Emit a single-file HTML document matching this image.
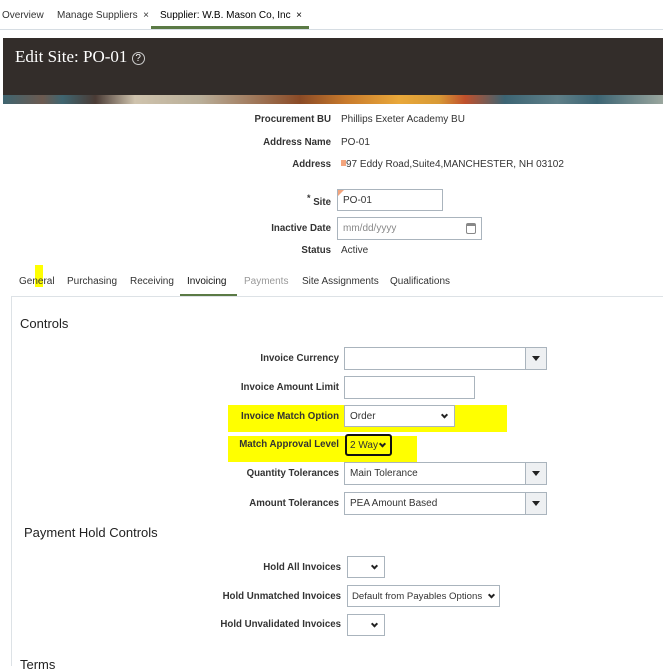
<!DOCTYPE html>
<html><head><style>
*{margin:0;padding:0;box-sizing:border-box}
body{width:663px;height:666px;overflow:hidden;background:#fff;font-family:"Liberation Sans",Arial,sans-serif;font-size:10px;color:#333;position:relative}
.a{position:absolute;white-space:nowrap}
.l{position:absolute;font-weight:bold;text-align:right;color:#333;white-space:nowrap;line-height:12px;font-size:9.7px}
.v{position:absolute;line-height:12px;white-space:nowrap}
.in{position:absolute;border:1px solid #aab4bd;background:#fff;font-size:10px;padding-left:5px;display:flex;align-items:center}
.btn{position:absolute;right:0;top:0;bottom:0;width:21px;border-left:1px solid #aab4bd;background:#eef0f2;display:flex;align-items:center;justify-content:center}
.tri{width:0;height:0;border-left:4px solid transparent;border-right:4px solid transparent;border-top:5px solid #222}
.chev{position:absolute;right:7px;top:50%;width:5px;height:5px;border-right:2px solid #222;border-bottom:2px solid #222;transform:translateY(-70%) rotate(45deg)}
.hl{position:absolute;background:#ffff00}
</style></head><body>
<div class="a" style="left:2px;top:10px;font-size:10px">Overview</div>
<div class="a" style="left:57px;top:10px;font-size:10px">Manage Suppliers &nbsp;×</div>
<div class="a" style="left:160px;top:10px;font-size:10px;color:#000">Supplier: W.B. Mason Co, Inc &nbsp;×</div>
<div class="a" style="left:151px;top:26px;width:158px;height:3px;background:#5b7a45"></div>
<div class="a" style="left:0;top:29px;width:663px;height:1px;background:#d6dde3"></div>
<div class="a" style="left:3px;top:38px;width:660px;height:57px;background:#332d2a"></div>
<div class="a" style="left:15px;top:47px;font-family:'Liberation Serif',serif;font-size:17px;color:#fff">Edit Site: PO-01 <span style="display:inline-block;width:13px;height:13px;border:1px solid #ccc;border-radius:50%;font-size:10px;text-align:center;line-height:11px;font-family:'Liberation Sans';vertical-align:1px">?</span></div>
<div class="a" style="left:3px;top:95px;width:660px;height:9px;background:linear-gradient(90deg,#3f6570 0%,#6c5a50 6%,#3f6570 9%,#4a3b35 14%,#cfc3ad 20%,#b9ae98 30%,#8a4a26 45%,#c87a2c 52%,#e9a83a 60%,#d89a36 66%,#c0502c 70%,#3c6473 76%,#5f7f88 84%,#3c6473 90%,#9aa69e 100%)"></div>

<div class="l" style="right:332px;top:114px">Procurement BU</div><div class="v" style="left:341px;top:114px">Phillips Exeter Academy BU</div>
<div class="l" style="right:332px;top:137px">Address Name</div><div class="v" style="left:341px;top:137px">PO-01</div>
<div class="l" style="right:332px;top:159px">Address</div><div class="v" style="left:341px;top:159px"><span style="display:inline-block;width:5px;height:6px;background:#f3a57d;vertical-align:1px"></span>97 Eddy Road,Suite4,MANCHESTER, NH 03102</div>
<div class="l" style="right:332px;top:192px"><sup style="font-size:9px">*</sup> Site</div>
<div class="in" style="left:337px;top:189px;width:106px;height:22px">PO-01<span style="position:absolute;left:0;top:0;border-top:6px solid #f3a57d;border-right:6px solid transparent"></span></div>
<div class="l" style="right:332px;top:223px">Inactive Date</div>
<div class="in" style="left:337px;top:217px;width:145px;height:23px;color:#888">mm/dd/yyyy<span style="position:absolute;right:5px;top:5px;width:10px;height:11px;border:1px solid #888;border-radius:2px;border-top:3px solid #888"></span></div>
<div class="l" style="right:332px;top:245px">Status</div><div class="v" style="left:341px;top:245px">Active</div>

<div class="hl" style="left:35px;top:265px;width:8px;height:22px"></div>
<div class="a" style="left:19px;top:276px">General</div>
<div class="a" style="left:67px;top:276px">Purchasing</div>
<div class="a" style="left:130px;top:276px">Receiving</div>
<div class="a" style="left:187px;top:276px;color:#111">Invoicing</div>
<div class="a" style="left:244px;top:276px;color:#999">Payments</div>
<div class="a" style="left:302px;top:276px">Site Assignments</div>
<div class="a" style="left:390px;top:276px">Qualifications</div>
<div class="a" style="left:180px;top:294px;width:57px;height:3px;background:#5b7a45"></div>
<div class="a" style="left:11px;top:296px;width:652px;height:1px;background:#dde2e6"></div>
<div class="a" style="left:11px;top:296px;width:1px;height:370px;background:#dde2e6"></div>

<div class="a" style="left:20px;top:316px;font-size:13px;color:#222">Controls</div>

<div class="hl" style="left:228px;top:405px;width:279px;height:27px"></div>
<div class="hl" style="left:228px;top:436px;width:189px;height:26px"></div>

<div class="l" style="right:324px;top:353px">Invoice Currency</div>
<div class="in" style="left:344px;top:347px;width:203px;height:23px"><div class="btn"><div class="tri"></div></div></div>
<div class="l" style="right:324px;top:382px">Invoice Amount Limit</div>
<div class="in" style="left:344px;top:376px;width:131px;height:23px"></div>
<div class="l" style="right:324px;top:411px">Invoice Match Option</div>
<div class="in" style="left:344px;top:405px;width:111px;height:22px">Order<span class="chev"></span></div>
<div class="l" style="right:324px;top:439px">Match Approval Level</div>
<div class="in" style="left:345px;top:434px;width:47px;height:22px;border:2px solid #111;border-radius:3px;padding-left:3px;background:#ffff00;overflow:hidden">2 Way<span class="chev" style="right:5px"></span></div>
<div class="l" style="right:324px;top:468px">Quantity Tolerances</div>
<div class="in" style="left:344px;top:462px;width:203px;height:23px">Main Tolerance<div class="btn"><div class="tri"></div></div></div>
<div class="l" style="right:324px;top:498px">Amount Tolerances</div>
<div class="in" style="left:344px;top:492px;width:203px;height:23px">PEA Amount Based<div class="btn"><div class="tri"></div></div></div>

<div class="a" style="left:24px;top:525px;font-size:13px;color:#222">Payment Hold Controls</div>
<div class="l" style="right:322px;top:562px">Hold All Invoices</div>
<div class="in" style="left:347px;top:556px;width:38px;height:22px"><span class="chev"></span></div>
<div class="l" style="right:322px;top:591px">Hold Unmatched Invoices</div>
<div class="in" style="left:347px;top:585px;width:153px;height:22px;padding-left:4px;font-size:9.6px">Default from Payables Options<span class="chev" style="right:5px"></span></div>
<div class="l" style="right:322px;top:619px">Hold Unvalidated Invoices</div>
<div class="in" style="left:347px;top:614px;width:38px;height:22px"><span class="chev"></span></div>
<div class="a" style="left:20px;top:657px;font-size:13px;color:#222">Terms</div>
</body></html>
